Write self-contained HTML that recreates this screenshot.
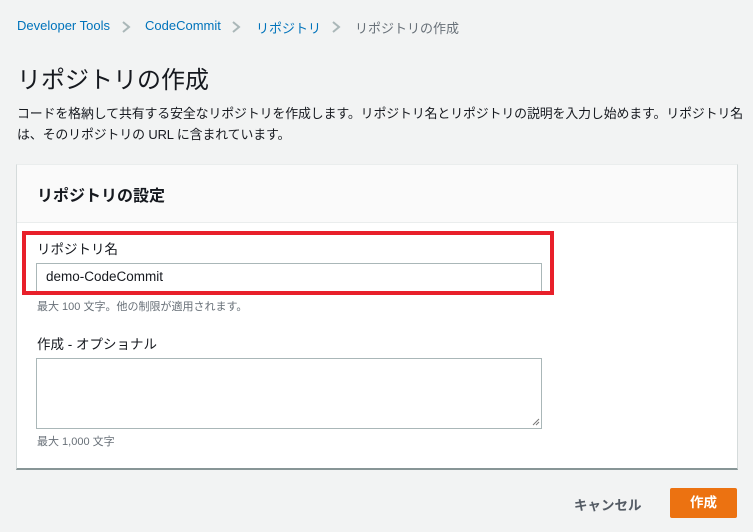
<!DOCTYPE html>
<html><head><meta charset="utf-8"><style>
body{margin:0;width:753px;height:532px;background:#f2f3f3;font-family:"Liberation Sans","Noto Sans CJK JP",sans-serif;position:relative;overflow:hidden;color:#16191f}
.a{position:absolute;white-space:nowrap}
.bc{top:18px;font-size:13px;color:#0073bb}
</style></head><body>
<div class="a bc" style="left:17px">Developer Tools</div>
<div class="a bc" style="left:145px">CodeCommit</div>
<div class="a bc" style="left:256px">リポジトリ</div>
<div class="a bc" style="left:355px;color:#687078">リポジトリの作成</div>
<svg class="a" style="left:120px;top:20px" width="12" height="14"><path d="M3 2l6 5-6 5" stroke="#aab7b8" stroke-width="2" fill="none"/></svg>
<svg class="a" style="left:230px;top:20px" width="12" height="14"><path d="M3 2l6 5-6 5" stroke="#aab7b8" stroke-width="2" fill="none"/></svg>
<svg class="a" style="left:330px;top:20px" width="12" height="14"><path d="M3 2l6 5-6 5" stroke="#aab7b8" stroke-width="2" fill="none"/></svg>
<div class="a" style="left:17px;top:60px;font-size:24px">リポジトリの作成</div>
<div class="a" style="left:17px;top:103px;font-size:12.9px;line-height:21px;letter-spacing:-0.1px">コードを格納して共有する安全なリポジトリを作成します。リポジトリ名とリポジトリの説明を入力し始めます。リポジトリ名<br>は、そのリポジトリの URL に含まれています。</div>
<div class="a" style="left:16px;top:164px;width:720px;height:303px;background:#fff;border:1px solid #d5dbdb;border-bottom:2px solid #879596;border-top-color:#eaeded"></div>
<div class="a" style="left:17px;top:165px;width:720px;height:57px;background:#fafafa;border-bottom:1px solid #eaeded"></div>
<div class="a" style="left:37px;top:182px;font-size:16px;font-weight:bold">リポジトリの設定</div>
<div class="a" style="left:37px;top:238px;font-size:13.5px">リポジトリ名</div>
<div class="a" style="left:36px;top:263px;width:504px;height:30px;border:1px solid #aab7b8;background:#fff"></div>
<div class="a" style="left:46px;top:269px;font-size:13.5px">demo-CodeCommit</div>
<div class="a" style="left:22px;top:231px;width:524px;height:56px;border:4px solid #e8202a"></div>
<div class="a" style="left:37px;top:298px;font-size:11px;color:#687078">最大 100 文字。他の制限が適用されます。</div>
<div class="a" style="left:37px;top:333px;font-size:13.5px">作成 - オプショナル</div>
<div class="a" style="left:36px;top:358px;width:504px;height:69px;border:1px solid #aab7b8;background:#fff"></div>
<svg class="a" style="left:532px;top:418px" width="8" height="8"><path d="M1 7L7 1M4 7L7 4" stroke="#777" stroke-width="1"/></svg>
<div class="a" style="left:37px;top:433px;font-size:11px;color:#687078">最大 1,000 文字</div>
<div class="a" style="left:574px;top:494px;font-size:13.5px;font-weight:bold;color:#545b64">キャンセル</div>
<div class="a" style="left:670px;top:488px;width:67px;height:30px;background:#ec7211;border-radius:2px;color:#fff;font-weight:bold;font-size:13.5px;text-align:center;line-height:30px">作成</div>
</body></html>
